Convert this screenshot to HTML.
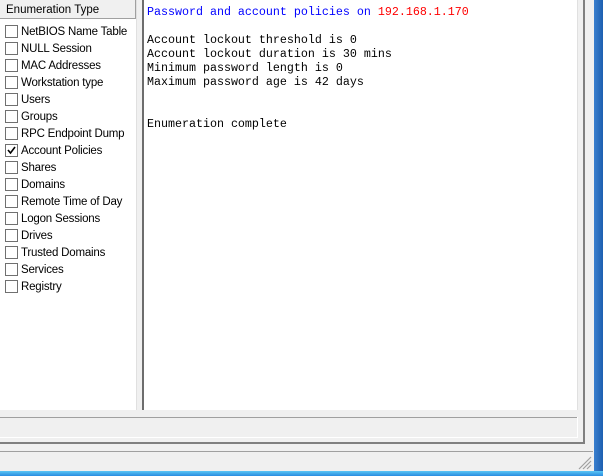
<!DOCTYPE html><html><head><style>
body{margin:0;width:603px;height:476px;background:#f0f0f0;position:relative;overflow:hidden;font-family:"Liberation Sans",sans-serif;}
.a{position:absolute}
#left{left:0;top:0;width:136px;height:410px;background:#fff;border-right:1px solid #e0e0e0}
#hdr{left:0;top:0;width:136px;height:19px;background:#f0f0f0;border-bottom:1px solid #a0a0a0;border-right:1px solid #a0a0a0;font-size:11.5px;line-height:21px;padding-left:6px;box-sizing:border-box;color:#000}
.it{position:absolute;left:5px;font-size:11.5px;color:#000;height:17px;line-height:14px;letter-spacing:-0.2px}
.cb{display:inline-block;width:11px;height:11px;border:1px solid #707070;background:#fff;vertical-align:top;margin-right:3px;position:relative}
#right{left:142px;top:0;width:436px;height:410px;background:#fff;border-left:2px solid #6d6d6d;box-sizing:border-box;border-right:1px solid #e0e0e0}
pre{margin:0;position:absolute;left:147px;top:5px;font-family:"Liberation Mono",monospace;font-size:11.67px;line-height:14px;color:#000}
</style></head><body>
<div id="left" class="a"></div>
<div id="hdr" class="a">Enumeration Type</div>
<div class="it" style="top:25px"><span class="cb"></span>NetBIOS Name Table</div>
<div class="it" style="top:42px"><span class="cb"></span>NULL Session</div>
<div class="it" style="top:59px"><span class="cb"></span>MAC Addresses</div>
<div class="it" style="top:76px"><span class="cb"></span>Workstation type</div>
<div class="it" style="top:93px"><span class="cb"></span>Users</div>
<div class="it" style="top:110px"><span class="cb"></span>Groups</div>
<div class="it" style="top:127px"><span class="cb"></span>RPC Endpoint Dump</div>
<div class="it" style="top:144px"><span class="cb"><svg width="11" height="11" style="position:absolute;left:0;top:0"><path d="M2 5 L4.5 8 L9 2" stroke="#000" stroke-width="1.6" fill="none"/></svg></span>Account Policies</div>
<div class="it" style="top:161px"><span class="cb"></span>Shares</div>
<div class="it" style="top:178px"><span class="cb"></span>Domains</div>
<div class="it" style="top:195px"><span class="cb"></span>Remote Time of Day</div>
<div class="it" style="top:212px"><span class="cb"></span>Logon Sessions</div>
<div class="it" style="top:229px"><span class="cb"></span>Drives</div>
<div class="it" style="top:246px"><span class="cb"></span>Trusted Domains</div>
<div class="it" style="top:263px"><span class="cb"></span>Services</div>
<div class="it" style="top:280px"><span class="cb"></span>Registry</div>
<div id="right" class="a"></div>
<pre><span style="color:#0000ff">Password and account policies on </span><span style="color:#ff0000">192.168.1.170</span>

Account lockout threshold is 0
Account lockout duration is 30 mins
Minimum password length is 0
Maximum password age is 42 days


Enumeration complete</pre>
<div class="a" style="left:583px;top:0;width:2px;height:443px;background:#808080"></div>
<div class="a" style="left:0;top:417px;width:578px;height:1px;background:#a0a0a0"></div>
<div class="a" style="left:577px;top:417px;width:1px;height:20px;background:#fff"></div>
<div class="a" style="left:0;top:437px;width:578px;height:1px;background:#fff"></div>
<div class="a" style="left:0;top:442px;width:585px;height:2px;background:#808080"></div>
<div class="a" style="left:0;top:451px;width:593px;height:1px;background:#a0a0a0"></div>
<svg class="a" style="left:578px;top:456px" width="14" height="14"><path d="M13 1L1 13M13 5L5 13M13 9L9 13" stroke="#a0a0a0" stroke-width="1.2"/></svg>
<div class="a" style="left:594px;top:0;width:9px;height:476px;background:linear-gradient(90deg,#3a7fcf,#1d5fb0)"></div>
<div class="a" style="left:0;top:471px;width:603px;height:5px;background:linear-gradient(#5bc6f5,#2a8ce0)"></div>
</body></html>
